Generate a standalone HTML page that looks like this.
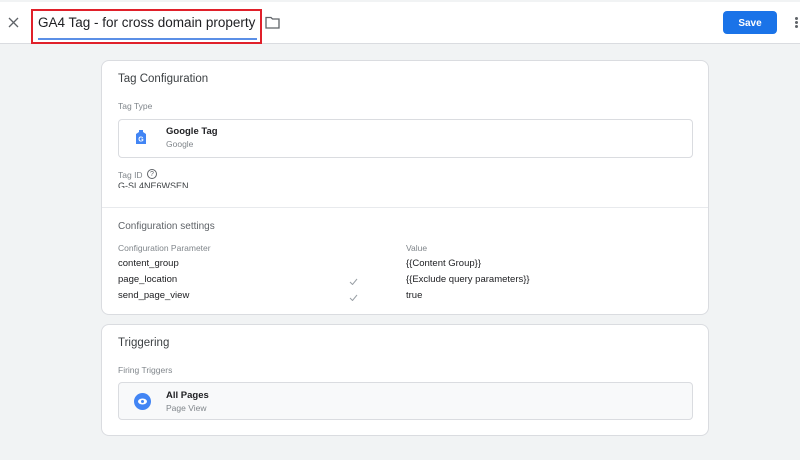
<!DOCTYPE html>
<html><head><style>
*{margin:0;padding:0;box-sizing:border-box}
body{width:800px;height:460px;background:#f1f3f4;font-family:"Liberation Sans",Arial,sans-serif;color:#202124;position:relative;overflow:hidden}
.top{position:absolute;left:0;top:0;width:800px;height:44px;background:#fff;border-bottom:1px solid #dadce0;border-top:2px solid #f1f3f4}
.abs{position:absolute}
.card{position:absolute;left:101px;width:608px;background:#fff;border:1px solid #dadce0;border-radius:8px}
.small{font-size:8.5px;color:#80868b}
.t{font-size:9.5px;color:#202124}
</style></head><body>
<div class="top"></div>
<svg class="abs" style="left:8px;top:17px" width="11" height="11" viewBox="0 0 11 11"><path d="M1 1L10 10M10 1L1 10" stroke="#5f6368" stroke-width="1.3"/></svg>
<div class="abs" style="left:31px;top:9px;width:231px;height:35px;border:2px solid #e0202a"></div>
<div class="abs" style="left:38px;top:15px;font-size:13.5px;color:#202124;white-space:nowrap">GA4 Tag - for cross domain property</div>
<div class="abs" style="left:38px;top:38px;width:219px;height:2px;background:#5b8fe6"></div>
<svg class="abs" style="left:265px;top:16px" width="15" height="13" viewBox="0 0 15 13"><path d="M1 1.5h5l1.5 1.5H14v9H1z" fill="none" stroke="#5f6368" stroke-width="1.3"/></svg>
<div class="abs" style="left:723px;top:11px;width:54px;height:23px;background:#1a73e8;border-radius:4px;color:#fff;font-size:10px;font-weight:bold;text-align:center;line-height:26px">Save</div>
<div class="abs" style="left:795px;top:17px;width:3px;height:3px;background:#5f6368;border-radius:50%;box-shadow:0 4px 0 #5f6368,0 8px 0 #5f6368"></div>

<div class="card" style="top:60px;height:255px">
<div class="abs" style="left:16px;top:12px;font-size:11.5px;color:#3c4043">Tag Configuration</div>
<div class="abs small" style="left:16px;top:40px">Tag Type</div>
<div class="abs" style="left:16px;top:58px;width:575px;height:39px;border:1px solid #dadce0;border-radius:4px"></div>
<svg class="abs" style="left:34px;top:69px" width="10" height="14" viewBox="0 0 10 14"><path d="M3 0h4v2l3 2v10H0V4l3-2z" fill="#4285f4"/><text x="5" y="11.5" font-size="7" fill="#fff" text-anchor="middle" font-family="Liberation Sans" font-weight="bold">G</text></svg>
<div class="abs" style="left:64px;top:65px;font-size:9.5px;font-weight:bold;color:#202124">Google Tag</div>
<div class="abs small" style="left:64px;top:78px">Google</div>
<div class="abs small" style="left:16px;top:109px">Tag ID</div>
<div class="abs" style="left:45px;top:108px;width:10px;height:10px;border:1px solid #5f6368;border-radius:50%;font-size:7px;text-align:center;line-height:9px;color:#5f6368">?</div>
<div class="abs" style="left:16px;top:120px;font-size:9px;color:#3c4043;height:7px;overflow:hidden">G-SL4NE6WSEN</div>
<div class="abs" style="left:0;top:146px;width:606px;height:1px;background:#e8eaed"></div>
<div class="abs" style="left:16px;top:160px;font-size:10px;color:#5f6368">Configuration settings</div>
<div class="abs small" style="left:16px;top:182px">Configuration Parameter</div>
<div class="abs small" style="left:304px;top:182px">Value</div>
<div class="abs t" style="left:16px;top:197px">content_group</div>
<div class="abs t" style="left:304px;top:197px">{{Content Group}}</div>
<div class="abs t" style="left:16px;top:213px">page_location</div>
<div class="abs t" style="left:304px;top:213px">{{Exclude query parameters}}</div>
<div class="abs t" style="left:16px;top:229px">send_page_view</div>
<div class="abs t" style="left:304px;top:229px">true</div>
<svg class="abs" style="left:247px;top:217px" width="9" height="7"><path d="M1 4l2.5 2.5L8 1" fill="none" stroke="#9aa0a6"/></svg>
<svg class="abs" style="left:247px;top:233px" width="9" height="7"><path d="M1 4l2.5 2.5L8 1" fill="none" stroke="#9aa0a6"/></svg>
</div>

<div class="card" style="top:324px;height:112px">
<div class="abs" style="left:16px;top:12px;font-size:11.5px;color:#3c4043">Triggering</div>
<div class="abs small" style="left:16px;top:40px">Firing Triggers</div>
<div class="abs" style="left:16px;top:57px;width:575px;height:38px;background:#f8f9fa;border:1px solid #dadce0;border-radius:4px"></div>
<svg class="abs" style="left:32px;top:68px" width="17" height="17" viewBox="0 0 17 17"><circle cx="8.5" cy="8.5" r="8.5" fill="#4285f4"/><ellipse cx="8.5" cy="8.5" rx="4.5" ry="3" fill="#fff"/><circle cx="8.5" cy="8.5" r="1.5" fill="#4285f4"/></svg>
<div class="abs" style="left:64px;top:65px;font-size:9.5px;font-weight:bold;color:#202124">All Pages</div>
<div class="abs small" style="left:64px;top:78px">Page View</div>
</div>
</body></html>
